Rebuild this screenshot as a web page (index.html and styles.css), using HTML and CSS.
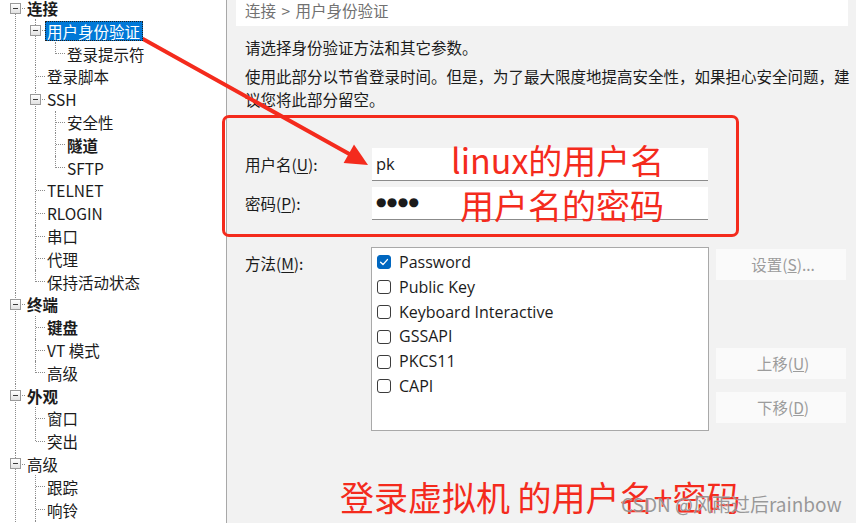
FILE: index.html
```html
<!DOCTYPE html>
<html lang="zh-CN">
<head>
<meta charset="utf-8">
<title>用户身份验证</title>
<link rel="stylesheet" href="styles.css">
</head>
<body>
<div class="window">
  <nav class="tree-panel">
    <ul class="tree">
      <li><div class="row"><span class="exp"></span><span class="label b">连接</span></div>
        <ul>
          <li><div class="row"><span class="exp"></span><span class="label sel">用户身份验证</span></div>
            <ul>
              <li><div class="row"><span class="sp"></span><span class="label">登录提示符</span></div></li>
            </ul>
          </li>
          <li><div class="row"><span class="sp"></span><span class="label">登录脚本</span></div></li>
          <li><div class="row"><span class="exp"></span><span class="label">SSH</span></div>
            <ul>
              <li><div class="row"><span class="sp"></span><span class="label">安全性</span></div></li>
              <li><div class="row"><span class="sp"></span><span class="label b">隧道</span></div></li>
              <li><div class="row"><span class="sp"></span><span class="label">SFTP</span></div></li>
            </ul>
          </li>
          <li><div class="row"><span class="sp"></span><span class="label">TELNET</span></div></li>
          <li><div class="row"><span class="sp"></span><span class="label">RLOGIN</span></div></li>
          <li><div class="row"><span class="sp"></span><span class="label">串口</span></div></li>
          <li><div class="row"><span class="sp"></span><span class="label">代理</span></div></li>
          <li><div class="row"><span class="sp"></span><span class="label">保持活动状态</span></div></li>
        </ul>
      </li>
      <li><div class="row"><span class="exp"></span><span class="label b">终端</span></div>
        <ul>
          <li><div class="row"><span class="sp"></span><span class="label b">键盘</span></div></li>
          <li><div class="row"><span class="sp"></span><span class="label">VT 模式</span></div></li>
          <li><div class="row"><span class="sp"></span><span class="label">高级</span></div></li>
        </ul>
      </li>
      <li><div class="row"><span class="exp"></span><span class="label b">外观</span></div>
        <ul>
          <li><div class="row"><span class="sp"></span><span class="label">窗口</span></div></li>
          <li><div class="row"><span class="sp"></span><span class="label">突出</span></div></li>
        </ul>
      </li>
      <li><div class="row"><span class="exp"></span><span class="label">高级</span></div>
        <ul>
          <li><div class="row"><span class="sp"></span><span class="label">跟踪</span></div></li>
          <li><div class="row"><span class="sp"></span><span class="label">响铃</span></div></li>
          <li><div class="row"><span class="sp"></span><span class="label">日志记录</span></div></li>
        </ul>
      </li>
      <li><div class="row"><span class="sp"></span><span class="label">文件传输</span></div></li>
    </ul>
  </nav>

  <main class="main">
    <div class="crumb">连接 &gt; 用户身份验证</div>
    <div class="intro">
      <p>请选择身份验证方法和其它参数。</p>
      <p>使用此部分以节省登录时间。但是，为了最大限度地提高安全性，如果担心安全问题，建议您将此部分留空。</p>
    </div>
    <div class="creds">
      <label class="lbl">用户名(<u>U</u>):</label>
      <div class="input">pk</div>
      <label class="lbl">密码(<u>P</u>):</label>
      <div class="input pw">●●●●</div>
    </div>
    <div class="methods">
      <label class="lbl mlbl">方法(<u>M</u>):</label>
      <div class="listbox">
        <div class="item"><span class="cb on"><svg viewBox="0 0 14 14" width="14" height="14"><path d="M3.6 7.3 L6 9.6 L10.4 4.6" fill="none" stroke="#fff" stroke-width="1.4" stroke-linecap="round" stroke-linejoin="round"/></svg></span>Password</div>
        <div class="item"><span class="cb"></span>Public Key</div>
        <div class="item"><span class="cb"></span>Keyboard Interactive</div>
        <div class="item"><span class="cb"></span>GSSAPI</div>
        <div class="item"><span class="cb"></span>PKCS11</div>
        <div class="item"><span class="cb"></span>CAPI</div>
      </div>
      <div class="btns">
        <div class="btn">设置(<u>S</u>)...</div>
        <div class="btn up">上移(<u>U</u>)</div>
        <div class="btn">下移(<u>D</u>)</div>
      </div>
    </div>
  </main>
</div>

<div class="annot">
  <div class="redbox"></div>
  <svg class="arrow" width="856" height="523" viewBox="0 0 856 523">
    <line x1="143" y1="39" x2="352" y2="155.5" stroke="#f42b1d" stroke-width="4" stroke-linecap="round"/>
    <polygon points="368,165 343.6,163 354,144.6" fill="#f42b1d"/>
  </svg>
  <div class="note n1">linux的用户名</div>
  <div class="note n2">用户名的密码</div>
  <div class="note n3">登录虚拟机 的用户名+密码</div>
  <div class="wm">CSDN @风雨过后rainbow</div>
</div>
</body>
</html>
```

FILE: styles.css
```css
html, body {
  margin: 0;
  padding: 0;
  width: 856px;
  height: 523px;
  overflow: hidden;
  font-family: "Noto Sans CJK SC", "Noto Sans", sans-serif;
  color: #1b1b1b;
}

.window {
  display: flex;
  width: 856px;
  height: 523px;
}

/* ---------- tree ---------- */
.tree-panel {
  width: 226px;
  flex: none;
  background: #fff;
  border-right: 1px solid #a8a8a8;
  overflow: hidden;
}

.tree, .tree ul {
  list-style: none;
  margin: 0;
  padding: 0;
}
.tree {
  margin-top: -3.4px;
}
.tree ul {
  padding-left: 20px;
}
.tree li {
  position: relative;
}
.tree li::before {
  content: "";
  position: absolute;
  left: 15px;
  top: 0;
  bottom: 0;
  border-left: 1px dotted #8c8c8c;
}
.tree > li:first-child::before {
  top: 11.4px;
}
.tree li:last-child::before {
  bottom: auto;
  height: 11.4px;
}

.row {
  position: relative;
  display: flex;
  align-items: center;
  height: 22.8px;
  padding-left: 10px;
  font-size: 15.5px;
  line-height: 20px;
}
.row::before {
  content: "";
  position: absolute;
  left: 16px;
  width: 9px;
  top: 11px;
  border-top: 1px dotted #8c8c8c;
}

.exp, .sp {
  width: 11px;
  height: 11px;
  flex: none;
  margin-right: 6px;
  box-sizing: border-box;
}
.exp {
  position: relative;
  z-index: 1;
  border: 1px solid #9a9a9a;
  background: linear-gradient(#ffffff, #e2e2e2);
}
.exp::after {
  content: "";
  position: absolute;
  left: 2px;
  right: 2px;
  top: 4px;
  height: 1px;
  background: #3a3a3a;
}

.label {
  white-space: nowrap;
  position: relative;
  z-index: 1;
}
.label.b {
  font-weight: 700;
}
.label.sel {
  background: #0078d7;
  color: #fff;
  padding: 0 3px 0 2px;
  margin-left: -2px;
  height: 20px;
  outline: 1px dotted #202020;
  outline-offset: -1px;
}

/* ---------- main ---------- */
.main {
  flex: 1;
  background: #f2f2f2;
  display: flex;
  flex-direction: column;
  font-size: 15.5px;
  line-height: 23px;
}

.crumb {
  margin: -6px 8px 0 9px;
  height: 32px;
  line-height: 32px;
  padding-left: 9px;
  background: #fff;
  color: #717171;
  word-spacing: 2px;
}

.intro {
  margin: 9.5px 0 0 18px;
}
.intro p {
  margin: 0;
}
.intro p + p {
  margin-top: 6px;
}

.creds {
  margin: 37px 0 0 18px;
  display: grid;
  grid-template-columns: 127px 336px;
  grid-auto-rows: 33px;
  row-gap: 6px;
  align-items: center;
}
.lbl u {
  text-decoration-thickness: 1px;
  text-underline-offset: 2px;
}
.input {
  height: 33px;
  box-sizing: border-box;
  background: #fff;
  border-bottom: 1px solid #8b8b8b;
  padding-left: 4px;
  font-family: "Open Sans", "Noto Sans", sans-serif;
  font-size: 16.5px;
  line-height: 31px;
  color: #1b1b1b;
}
.input.pw {
  font-family: "DejaVu Sans", sans-serif;
  font-size: 12px;
  letter-spacing: 0.4px;
  line-height: 30px;
}

.methods {
  margin: 27px 0 0 18px;
  display: grid;
  grid-template-columns: 126px 338px 137px;
  align-items: start;
}
.mlbl {
  padding-top: 5.5px;
}
.listbox {
  height: 184px;
  box-sizing: border-box;
  background: #fff;
  border: 1px solid #a9a9a9;
  padding: 2.6px 0 0 5px;
  font-family: "Open Sans", "Noto Sans", sans-serif;
  font-size: 16px;
}
.item {
  display: flex;
  align-items: center;
  height: 24.8px;
  color: #1b1b1b;
  white-space: nowrap;
}
.cb {
  width: 14px;
  height: 14px;
  box-sizing: border-box;
  border: 1px solid #3c3c3c;
  border-radius: 3px;
  margin-right: 8px;
  flex: none;
  display: flex;
}
.cb.on {
  background: #0067c0;
  border-color: #0067c0;
}
.cb svg {
  display: block;
  margin: -1px;
}

.btns {
  margin-left: 7px;
  padding-top: 2px;
  display: flex;
  flex-direction: column;
}
.btn {
  height: 31px;
  line-height: 31px;
  text-align: center;
  background: #fafafa;
  color: #9c9c9c;
  padding-left: 4px;
}
.btn.up {
  margin-top: 68px;
  margin-bottom: 13px;
}

/* ---------- annotations (overlay) ---------- */
.annot {
  position: absolute;
  left: 0;
  top: 0;
  width: 856px;
  height: 523px;
  pointer-events: none;
}
.redbox {
  position: absolute;
  left: 222px;
  top: 115px;
  width: 517px;
  height: 122px;
  box-sizing: border-box;
  border: 3px solid #f42b1d;
  border-radius: 7px;
}
.arrow {
  position: absolute;
  left: 0;
  top: 0;
}
.note {
  position: absolute;
  color: #f42b1d;
  font-family: "Noto Sans CJK SC", sans-serif;
  font-size: 34px;
  line-height: 40px;
  white-space: nowrap;
}
.n1 { left: 451px; top: 140px; }
.n2 { left: 460px; top: 185px; }
.n3 { left: 340px; top: 477px; }
.wm {
  position: absolute;
  left: 621px;
  top: 491px;
  font-family: "Noto Sans CJK SC", sans-serif;
  font-size: 19px;
  line-height: 26px;
  color: #8f8f8f;
  text-shadow: 0 0 1px #fff;
  opacity: 0.9;
  white-space: nowrap;
}
```
